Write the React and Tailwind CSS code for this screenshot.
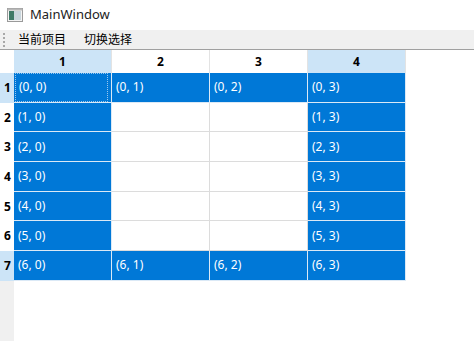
import React from 'react';

const cols = ['1', '2', '3', '4'];
const rows = [0, 1, 2, 3, 4, 5, 6];
const selCols = [0, 3];
const selRows = [0, 6];

const isSel = (r, c) => selCols.includes(c) || selRows.includes(r);

const App = () => {
    return (
        <div
            className="w-[474px] h-[341px] bg-white flex flex-col overflow-hidden text-[12px] text-black"
            style={{ fontFamily: '"Segoe UI", "Noto Sans", "Noto Sans CJK SC", sans-serif' }}
        >
            {/* Title bar */}
            <div className="h-[30px] flex items-center gap-[7px] pl-[7px] bg-white">
                <svg width="16" height="14" viewBox="0 0 16 14">
                    <rect x="0.5" y="0.5" width="15" height="13" fill="#f4f4f4" stroke="#9a9a9a" />
                    <rect x="2" y="3" width="5" height="9" fill="#3f7a68" />
                    <rect x="7" y="3" width="7" height="9" fill="#c9d6dd" />
                    <rect x="0.5" y="0.5" width="15" height="2" fill="#b8b8b8" />
                </svg>
                <span className="text-[13px] text-[#222]">MainWindow</span>
            </div>

            {/* Toolbar */}
            <div className="h-[20px] flex items-center bg-[#f0f0f0] border-b border-[#a0a0a0]">
                <div className="w-[3px] h-[14px] ml-[3px] border-l-2 border-dotted border-[#a8a8a8]" />
                <span className="ml-[12px] text-[12px]">当前项目</span>
                <span className="ml-[18px] text-[12px]">切换选择</span>
            </div>

            {/* Table */}
            <div className="flex-1 flex">
                <div className="flex flex-col">
                    <div className="grid grid-cols-[14px_98px_98px_98px_98px]">
                        <div className="h-[23px] bg-white" />
                        {cols.map((c, i) => (
                            <div
                                key={c}
                                className={`h-[23px] flex items-center justify-center font-bold border-r border-[#e3e3e3] ${selCols.includes(i) ? 'bg-[#cce4f7]' : 'bg-white'}`}
                            >
                                {c}
                            </div>
                        ))}
                        {rows.map((r) => (
                            <React.Fragment key={r}>
                                <div
                                    className={`h-[29.7px] flex items-center pl-[4px] font-bold ${selRows.includes(r) ? 'bg-[#cce4f7]' : 'bg-white'}`}
                                >
                                    {r + 1}
                                </div>
                                {cols.map((c, i) => {
                                    const sel = isSel(r, i);
                                    const focus = r === 0 && i === 0;
                                    return (
                                        <div
                                            key={c}
                                            className={`h-[29.7px] flex items-center pl-[4px] border-r border-b ${sel ? 'bg-[#0078d7] text-white border-[#dbe9f6]' : 'bg-white border-[#dcdcdc]'}`}
                                        >
                                            {focus ? (
                                                <div className="w-full h-full flex items-center border border-dotted border-[#9cc8ee] -ml-[3px] pl-[3px]">
                                                    ({r}, {i})
                                                </div>
                                            ) : (
                                                sel && `(${r}, ${i})`
                                            )}
                                        </div>
                                    );
                                })}
                            </React.Fragment>
                        ))}
                    </div>
                    <div className="flex-1 w-[14px] bg-[#f0f0f0]" />
                </div>
                <div className="flex-1 bg-white" />
            </div>
        </div>
    );
};

export default App;
